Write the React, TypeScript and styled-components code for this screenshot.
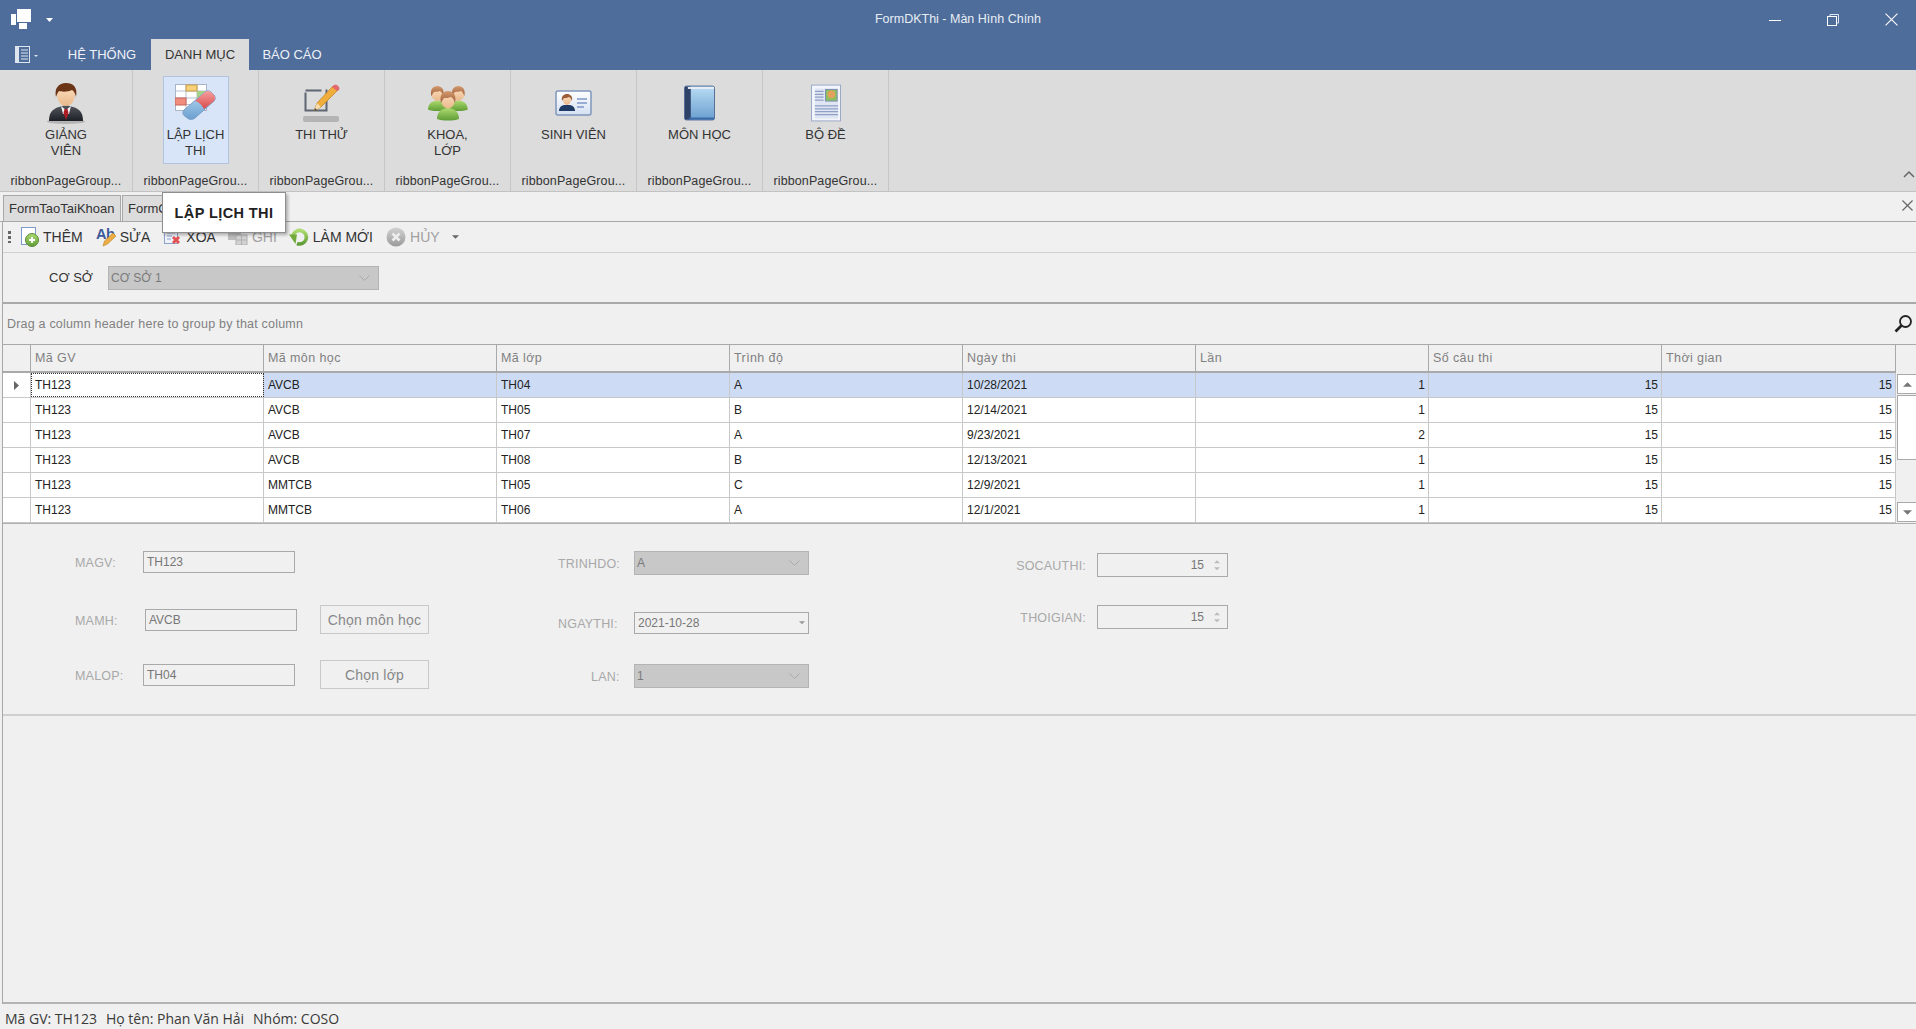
import React from "react";
import styled, { createGlobalStyle } from "styled-components";

const Global = createGlobalStyle`
  html, body { margin: 0; padding: 0; background: #f0f0f0; }
  body { font-family: "Liberation Sans", Arial, sans-serif; font-size: 13px; color: #222; overflow: hidden; }
  * { box-sizing: border-box; }
`;

const Page = styled.div`
  position: relative; width: 1916px; height: 1029px; display: flex; flex-direction: column; overflow: hidden; background: #f0f0f0;
`;
const TitleBar = styled.div`
  height: 39px; background: #4e6d9b; display: flex; align-items: center; position: relative; padding-left: 11px; color: #eef2f8;
`;
const TitleText = styled.div`
  position: absolute; left: 0; right: 0; top: 12px; text-align: center; font-size: 12.5px; color: #e8edf5;
`;
const WinButtons = styled.div`
  margin-left: auto; display: flex; align-items: center; gap: 46px; padding-right: 18px;
`;
const TabStrip = styled.div`
  height: 31px; background: #4e6d9b; display: flex; align-items: stretch; padding-left: 15px;
`;
const MenuIcon = styled.div`
  width: 25px; display: flex; align-items: center; margin-right: 29px;
`;
const RibbonTab = styled.div<{ $active?: boolean; $w: number; $ml?: number; $mr?: number }>`
  display: flex; align-items: center; justify-content: center; font-size: 13px; white-space: nowrap;
  width: ${p => p.$w}px; margin-left: ${p => p.$ml ?? 0}px; margin-right: ${p => p.$mr ?? 0}px;
  color: ${p => (p.$active ? "#333" : "#eef2f8")}; background: ${p => (p.$active ? "#dcdcdc" : "transparent")};
`;
const Ribbon = styled.div`
  height: 122px; background: #dcdcdc; border-bottom: 1px solid #c2c2c2; display: flex; position: relative;
`;
const Group = styled.div<{ $w: number }>`
  width: ${p => p.$w}px; height: 121px; border-right: 1px solid #c6c6c6; display: flex; flex-direction: column; align-items: center;
`;
const LargeButton = styled.div<{ $hot?: boolean }>`
  width: 66px; height: 88px; margin-top: 6px; display: flex; flex-direction: column; align-items: center; padding-top: 5px;
  border: 1px solid ${p => (p.$hot ? "#b2c4de" : "transparent")}; background: ${p => (p.$hot ? "#d8e5f8" : "transparent")};
  svg { flex: none; }
`;
const IconBox = styled.div`
  height: 42px; display: flex; align-items: center; justify-content: center; flex: none;
`;
const LargeLabel = styled.div`
  width: 90px; flex: none; text-align: center; font-size: 13px; line-height: 16px; color: #333; margin-top: 3px;
`;
const GroupCaption = styled.div`
  margin-top: auto; height: 19px; font-size: 12.5px; letter-spacing: .1px; color: #333; white-space: nowrap; line-height: 18px;
`;
const Collapse = styled.div`
  position: absolute; right: 1px; bottom: 11px; width: 12px; height: 10px; display: flex;
`;
const DocTabs = styled.div`
  height: 30px; border-bottom: 1px solid #a8a8a8; display: flex; align-items: flex-end; padding-left: 3px; gap: 1px; position: relative;
`;
const DocTab = styled.div<{ $w: number }>`
  width: ${p => p.$w}px; height: 26px; background: #dcdcdc; border: 1px solid #a8a8a8; border-bottom: none; padding: 5px 0 0 5px;
  font-size: 13px; color: #333; white-space: nowrap; overflow: hidden;
`;
const DocClose = styled.div`
  position: absolute; right: 2px; top: 8px; width: 12px; height: 12px; display: flex;
`;
const Tooltip = styled.div`
  position: absolute; left: 162px; top: 192px; width: 124px; height: 41px; background: #fff; border: 1px solid #8e8e8e;
  box-shadow: 2px 2px 3px rgba(0,0,0,.28); display: flex; align-items: center; justify-content: center;
  font-size: 14.5px; font-weight: 700; color: #222; z-index: 5; letter-spacing: .4px;
`;
const Content = styled.div`
  flex: 1; min-height: 0; margin-left: 2px; border-left: 1px solid #a8a8a8; display: flex; flex-direction: column;
`;
const Toolbar = styled.div`
  height: 31px; display: flex; align-items: center; padding-left: 5px; flex: none; border-bottom: 1px solid #d0d0d0;
`;
const Grip = styled.div`
  width: 3px; height: 12px; margin-right: 10px; background: repeating-linear-gradient(#666 0 3px, transparent 3px 5px);
`;
const ToolItem = styled.div<{ $off?: boolean; $mr: number }>`
  display: flex; align-items: center; gap: 4px; font-size: 14px; margin-right: ${p => p.$mr}px;
  color: ${p => (p.$off ? "#a0a0a0" : "#333")}; svg { flex: none; }
`;
const BasePanel = styled.div`
  height: 52px; flex: none; display: flex; align-items: center; border-bottom: 2px solid #a9a9a9; padding: 1px 0 0 46px; margin-top: -1px;
`;
const BaseLabel = styled.div`
  width: 59px; font-size: 13px; color: #333;
`;
const Combo = styled.div<{ $w: number; $h: number }>`
  width: ${p => p.$w}px; height: ${p => p.$h}px; background: #c8c8c8; border: 1px solid #b4b4b4; display: flex; align-items: center;
  justify-content: space-between; padding: 0 8px 0 2px; font-size: 12px; color: #7a7a7a; flex: none;
`;
const GroupPanel = styled.div`
  height: 41px; flex: none; display: flex; align-items: center; padding-left: 4px; font-size: 12.5px; letter-spacing: .2px; color: #808080; position: relative;
  border-bottom: 1px solid #a9a9a9;
`;
const SearchIcon = styled.div`
  position: absolute; right: 3px; top: 10px; display: flex;
`;
const GridWrap = styled.div`
  flex: none; display: flex; border-bottom: 1px solid #b0b0b0;
`;
const GridBody = styled.div`
  width: 1893px; flex: none;
`;
const GridRowEl = styled.div<{ $h?: number; $bg?: string; $line?: string }>`
  display: grid; grid-template-columns: 28px repeat(7, 233px) 234px; height: ${p => p.$h ?? 25}px;
  background: ${p => p.$bg ?? "#fff"}; border-bottom: ${p => (p.$line ? `2px solid ${p.$line}` : "1px solid #c8c8c8")};
`;
const HeadCell = styled.div`
  border-right: 1px solid #a9a9a9; display: flex; align-items: center; padding-left: 4px; font-size: 12.5px; letter-spacing: .4px; color: #808080;
`;
const Indicator = styled.div`
  border-right: 1px solid #c8c8c8; background: #fff; display: flex; align-items: center; justify-content: center;
`;
const Cell = styled.div<{ $right?: boolean; $focus?: boolean }>`
  border-right: 1px solid #c8c8c8; display: flex; align-items: center; padding: 0 3px 0 4px; font-size: 12px; color: #222;
  justify-content: ${p => (p.$right ? "flex-end" : "flex-start")};
  ${p => (p.$focus ? "background:#fff; outline: 1px dotted #333; outline-offset: -1px;" : "")}
`;
const ScrollBar = styled.div`
  width: 22px; flex: none; display: flex; flex-direction: column; margin-top: 28px; padding: 1px 0 1px 1px; background: #f0f0f0;
`;
const ScrollBtn = styled.div`
  height: 20px; background: #fff; border: 1px solid #a9a9a9; display: flex; align-items: center; justify-content: center; flex: none;
`;
const ScrollThumb = styled.div`
  height: 65px; background: #fff; border: 1px solid #a9a9a9; flex: none; margin-top: 1px;
`;
const ScrollSpace = styled.div`
  flex: 1;
`;
const FormPanel = styled.div`
  height: 192px; flex: none; border-bottom: 2px solid #cfcfcf; display: flex; position: relative;
`;
const FormCol = styled.div<{ $w: number }>`
  width: ${p => p.$w}px; flex: none; display: flex; flex-direction: column;
`;
const FormRow = styled.div<{ $mt: number; $pl: number }>`
  display: flex; align-items: center; margin-top: ${p => p.$mt}px; padding-left: ${p => p.$pl}px; flex: none;
`;
const FieldLabel = styled.div<{ $w: number; $right?: boolean }>`
  width: ${p => p.$w}px; flex: none; font-size: 12.5px; letter-spacing: .2px; color: #a8a8a8; text-align: ${p => (p.$right ? "right" : "left")};
  padding-right: ${p => (p.$right ? 11 : 0)}px; padding-top: 2px;
`;
const TextInput = styled.div<{ $w?: number; $h?: number; $right?: boolean }>`
  width: ${p => p.$w ?? 152}px; height: ${p => p.$h ?? 22}px; flex: none; border: 1px solid #a9a9a9; display: flex; align-items: center; padding: 0 3px;
  font-size: 12px; color: #777; justify-content: ${p => (p.$right ? "flex-end" : "space-between")}; background: #f0f0f0;
`;
const FormButton = styled.div<{ $ml: number }>`
  width: 109px; height: 29px; margin-left: ${p => p.$ml}px; flex: none; border: 1px solid #c8c8c8; display: flex; align-items: center; justify-content: center; font-size: 14px; letter-spacing: .2px; color: #888;
`;
const Spinner = styled.div`
  display: flex; flex-direction: column; gap: 3px; margin: 0 4px 0 10px;
`;
const Spacer = styled.div`
  flex: 1; border-bottom: 2px solid #b4b4b4;
`;
const StatusBar = styled.div`
  height: 25px; flex: none; display: flex; align-items: center; padding: 4px 0 0 5px; gap: 9px; font-family: "Open Sans", sans-serif; font-size: 14px; color: #3a3a3a;
`;
const Caret = styled.svg`
  margin-left: 14px;
`;
const HiddenSvg = styled.svg`
  position: absolute;
`;

const Tri = ({ up, c = "#777", w = 9 }: { up?: boolean; c?: string; w?: number }) => (
  <svg width={w} height={w / 2 + 0.5} viewBox="0 0 10 5"><path d={up ? "M5 0 10 5H0z" : "M0 0h10L5 5z"} fill={c} /></svg>
);
const Chevron = () => (
  <svg width="11" height="6" viewBox="0 0 11 6"><path d="M.5.5 5.5 5.5 10.5.5" fill="none" stroke="#aaa" /></svg>
);

const Defs = () => (
  <HiddenSvg width="0" height="0">
    <defs>
      <linearGradient id="suit" x1="0" y1="0" x2="0" y2="1"><stop offset="0" stopColor="#55595f" /><stop offset="1" stopColor="#1d2026" /></linearGradient>
      <linearGradient id="skin" x1="0" y1="0" x2="0" y2="1"><stop offset="0" stopColor="#fde2c2" /><stop offset="1" stopColor="#eab88c" /></linearGradient>
      <linearGradient id="erase" x1="0" y1="0" x2="0" y2="1"><stop offset="0" stopColor="#f7a0a0" /><stop offset="1" stopColor="#d84a4a" /></linearGradient>
      <linearGradient id="blue" x1="0" y1="0" x2="0" y2="1"><stop offset="0" stopColor="#b9dcf4" /><stop offset="1" stopColor="#6a9fd0" /></linearGradient>
      <linearGradient id="green" x1="0" y1="0" x2="0" y2="1"><stop offset="0" stopColor="#aedb70" /><stop offset="1" stopColor="#5f9c35" /></linearGradient>
      <linearGradient id="hair" x1="0" y1="0" x2="0" y2="1"><stop offset="0" stopColor="#d59a70" /><stop offset="1" stopColor="#9c5d36" /></linearGradient>
      <linearGradient id="card" x1="0" y1="0" x2="0" y2="1"><stop offset="0" stopColor="#ffffff" /><stop offset="1" stopColor="#d5e0f2" /></linearGradient>
      <linearGradient id="disk" x1="0" y1="0" x2="0" y2="1"><stop offset="0" stopColor="#d2d2d2" /><stop offset="1" stopColor="#9a9a9a" /></linearGradient>
    </defs>
  </HiddenSvg>
);

const ManIcon = () => (
  <svg width="40" height="42" viewBox="0 0 40 42">
    <ellipse cx="20" cy="39.500" rx="19" ry="2.500" fill="#999" opacity=".6" />
    <path d="M3 39c0-8 3-12 10-14l7-2 7 2c7 2 10 6 10 14z" fill="url(#suit)" />
    <path d="M15 24l5 4 5-4 -2 8h-6z" fill="#f2f2f2" />
    <path d="M18.500 27h3l1 4-2.500 7-2.500-7z" fill="#b01c24" />
    <ellipse cx="20" cy="13" rx="9" ry="11" fill="url(#skin)" />
    <path d="M10 15C8 6 13 1 20 1s12 4 10 14c-1-4-2-6-4-7-4 2-10 2-13 1-1 1-2 3-3 6z" fill="#6b3416" />
  </svg>
);
const ScheduleIcon = () => (
  <svg width="42" height="38" viewBox="0 0 42 38">
    <rect x=".5" y=".5" width="31" height="26" fill="#fff" stroke="#a9b4c8" />
    <path d="M0 7h32M0 14h32M0 20.500h32M11 0v27M22 0v27" stroke="#b5bfd0" />
    <rect x="11" y="1" width="11" height="6" fill="#f6d178" stroke="#c99b45" />
    <rect x="22" y="7" width="10" height="7" fill="#a6d188" />
    <rect x="0" y="14" width="11" height="7" fill="#ef8c7e" stroke="#c6655a" />
    <path d="M9 26 30 8c2-1.500 4-1.500 6 0l3 3c1.500 2 1.500 4 0 6L20 34c-2 1.500-5 2-7 .5l-4-3c-1.500-1.500-1.500-4 0-5.500z" fill="url(#blue)" stroke="#7b9cc4" />
    <path d="M20 17 30 8c2-1.500 4-1.500 6 0l3 3c1.500 2 1.500 4 0 6L29 25c-2-4-5-7-9-8z" fill="url(#erase)" />
  </svg>
);
const PencilIcon = () => (
  <svg width="38" height="38" viewBox="0 0 38 38">
    <rect x="2.500" y="6.500" width="21" height="20" fill="none" stroke="#5e6672" strokeWidth="2" strokeDasharray="16 4 60" />
    <path d="M11 27 14 19 30 2l5 4-17 17z" fill="#f0ad3c" stroke="#b97f20" strokeWidth=".7" />
    <path d="M11 27l3-8 4 4z" fill="#f4dcb0" />
    <path d="M11 27l1-3 2 2z" fill="#444" />
    <path d="M29 3l2-2c1-.5 2-.5 3 0l2 2c.5 1 .5 2 0 3l-2 1z" fill="#e0686c" />
    <rect x="0" y="32" width="36" height="6" rx="2" fill="#aaa" opacity=".8" />
  </svg>
);
const Person = ({ x, y, s = 1 }: { x: number; y: number; s?: number }) => (
  <g transform={`translate(${x} ${y}) scale(${s})`}>
    <path d="M0 28c0-7 4-10 10-11h2c6 1 10 4 10 11 -6 2-16 2-22 0z" fill="url(#green)" />
    <ellipse cx="11" cy="9" rx="7" ry="8.500" fill="url(#skin)" />
    <path d="M4 12C2 4 6 0 11 0s9 4 7 12c-1-3-2-5-4-6-2 1-5 1-7 1-1 1-2 3-3 5z" fill="url(#hair)" />
  </g>
);
const PeopleIcon = () => (
  <svg width="40" height="36" viewBox="0 0 40 36">
    <Person x={0} y={1} s={.85} /><Person x={21} y={1} s={.85} /><Person x={9} y={6} s={1} />
  </svg>
);
const CardIcon = () => (
  <svg width="37" height="26" viewBox="0 0 37 26">
    <rect x="1" y="1" width="35" height="24" rx="2" fill="url(#card)" stroke="#7f97bb" strokeWidth="1.500" />
    <path d="M4 21c0-4 3-6 6-6h4c3 0 6 2 6 6z" fill="#1f3a63" />
    <ellipse cx="12" cy="10" rx="4" ry="5" fill="url(#skin)" />
    <path d="M7 11c-1-5 2-7 5-7s6 2 5 7c-1-2-1-3-3-4-2 1-3 1-5 1z" fill="#9c5d36" />
    <path d="M22 9h10M22 13h10M22 17h7" stroke="#7f97c8" strokeWidth="1.500" />
  </svg>
);
const BookIcon = () => (
  <svg width="31" height="36" viewBox="0 0 32 36">
    <rect x=".5" y=".5" width="31" height="35" rx="2" fill="url(#blue)" stroke="#546c94" />
    <rect x="1" y="1" width="6" height="34" fill="#2f4369" />
    <rect x="4" y="1.500" width="27" height="2" fill="#e8eef6" />
    <rect x="5" y="33" width="26" height="2" fill="#3a6aa8" />
  </svg>
);
const DocIcon = () => (
  <svg width="30" height="38" viewBox="0 0 31 38">
    <rect x=".5" y=".5" width="30" height="37" fill="#f2f5fb" stroke="#9aa8c6" />
    <rect x="4" y="4" width="24" height="31" fill="#dfe5f2" />
    <path d="M4 7h9M4 10h9M4 13h9M4 16h9M4 22h24M4 25h24M4 28h24M4 31h24" stroke="#8f9fc6" strokeWidth="1.300" />
    <rect x="15" y="5" width="12" height="12" fill="#8cbf60" stroke="#7a8db0" />
    <circle cx="21" cy="10" r="4" fill="#e3a15c" />
  </svg>
);
const ThemIcon = () => (
  <svg width="18" height="20" viewBox="0 0 18 20">
    <rect x=".5" y=".5" width="14" height="17" fill="#fff" stroke="#7e9bcf" />
    <circle cx="11" cy="13" r="6.500" fill="url(#green)" stroke="#5a8a35" />
    <path d="M8 13h6M11 10v6" stroke="#fff" strokeWidth="1.800" />
  </svg>
);
const SuaIcon = () => (
  <svg width="20" height="20" viewBox="0 0 20 20">
    <text x="0" y="12" fontFamily="Liberation Sans" fontWeight="700" fontSize="14.500" letterSpacing="-.5" fill="#3c5a9a">Ab</text>
    <path d="M7 19l1.500-5L17 6l3 3-8.500 8z" fill="#eead45" stroke="#b97f20" strokeWidth=".6" />
  </svg>
);
const XoaIcon = () => (
  <svg width="18" height="18" viewBox="0 0 18 18">
    <rect x=".5" y="1.500" width="13" height="14" fill="#eef2fa" stroke="#8ea2cc" />
    <path d="M3 5h8M3 8h5M3 11h4" stroke="#8ea2cc" />
    <path d="M8 10l2-2 2 2 2-2 2 2-2 2 2 2-2 2-2-2-2 2-2-2 2-2z" fill="#e25050" />
  </svg>
);
const GhiIcon = () => (
  <svg width="20" height="16" viewBox="0 0 20 16">
    <rect x="0" y="2" width="13" height="9" fill="#bdbdbd" />
    <rect x="8" y="6" width="11" height="10" fill="#d2d2d2" stroke="#b0b0b0" />
    <path d="M8 11h11M13.500 6v10" stroke="#b0b0b0" />
  </svg>
);
const LamMoiIcon = () => (
  <svg width="20" height="20" viewBox="0 0 20 20">
    <path d="M4 8.500A6.800 6.800 0 1 1 8 16.500" fill="none" stroke="url(#green)" strokeWidth="3.600" />
    <path d="M0 7.500h8l-1.500 9.500z" fill="#72ab3c" />
  </svg>
);
const HuyIcon = () => (
  <svg width="20" height="20" viewBox="0 0 20 20">
    <circle cx="10" cy="10" r="9.500" fill="url(#disk)" />
    <path d="M6.500 6.500l7 7M13.500 6.500l-7 7" stroke="#eee" strokeWidth="2.600" />
  </svg>
);
const AppLogo = () => (
  <svg width="21" height="21" viewBox="0 0 21 21" fill="#fff">
    <rect x="0" y="5" width="5" height="11" /><rect x="6" y="0" width="14" height="13" /><rect x="8" y="14" width="8" height="6" />
  </svg>
);
const MenuGlyph = () => (
  <svg width="24" height="17" viewBox="0 0 24 17">
    <rect x=".5" y=".5" width="14" height="16" fill="none" stroke="#dfe5ee" />
    <rect x="1" y="1" width="3" height="15" fill="#dfe5ee" />
    <path d="M6 4h7M6 7h7M6 10h7M6 13h7" stroke="#dfe5ee" />
    <path d="M19 9h4l-2 2z" fill="#dfe5ee" />
  </svg>
);
const X = ({ s, c, w = 1 }: { s: number; c: string; w?: number }) => (
  <svg width={s} height={s} viewBox="0 0 12 12"><path d="M.5.5l11 11M11.500.5l-11 11" stroke={c} strokeWidth={w} /></svg>
);

const groups = [
  { w: 133, icon: <ManIcon />, label: <>GIẢNG<br />VIÊN</>, cap: "ribbonPageGroup..." },
  { w: 126, icon: <ScheduleIcon />, label: <>LẬP LỊCH<br />THI</>, cap: "ribbonPageGrou...", hot: true },
  { w: 126, icon: <PencilIcon />, label: <>THI THỬ</>, cap: "ribbonPageGrou..." },
  { w: 126, icon: <PeopleIcon />, label: <>KHOA,<br />LỚP</>, cap: "ribbonPageGrou..." },
  { w: 126, icon: <CardIcon />, label: <>SINH VIÊN</>, cap: "ribbonPageGrou..." },
  { w: 126, icon: <BookIcon />, label: <>MÔN HỌC</>, cap: "ribbonPageGrou..." },
  { w: 126, icon: <DocIcon />, label: <>BỘ ĐỀ</>, cap: "ribbonPageGrou..." },
];

const heads = ["Mã GV", "Mã môn học", "Mã lớp", "Trình độ", "Ngày thi", "Lần", "Số câu thi", "Thời gian"];
const rows = [
  ["TH123", "AVCB", "TH04", "A", "10/28/2021", "1", "15", "15"],
  ["TH123", "AVCB", "TH05", "B", "12/14/2021", "1", "15", "15"],
  ["TH123", "AVCB", "TH07", "A", "9/23/2021", "2", "15", "15"],
  ["TH123", "AVCB", "TH08", "B", "12/13/2021", "1", "15", "15"],
  ["TH123", "MMTCB", "TH05", "C", "12/9/2021", "1", "15", "15"],
  ["TH123", "MMTCB", "TH06", "A", "12/1/2021", "1", "15", "15"],
];

const SpinBox = () => (
  <Spinner><Tri up c="#bbb" w={6} /><Tri c="#bbb" w={6} /></Spinner>
);

export default function App() {
  return (
    <Page>
      <Global />
      <Defs />
      <TitleBar>
        <AppLogo />
        <Caret width="7" height="4" viewBox="0 0 7 4"><path d="M0 0h7L3.500 4z" fill="#fff" /></Caret>
        <TitleText>FormDKThi - Màn Hình Chính</TitleText>
        <WinButtons>
          <svg width="12" height="12" viewBox="0 0 12 12"><path d="M0 6.500h12" stroke="#fff" /></svg>
          <svg width="12" height="12" viewBox="0 0 12 12"><path d="M3 2.500V.5h8.500v8.500H9.500" fill="none" stroke="#dfe6f2" /><rect x=".5" y="2.500" width="9" height="9" fill="none" stroke="#fff" /></svg>
          <X s={13} c="#fff" />
        </WinButtons>
      </TitleBar>
      <TabStrip>
        <MenuIcon><MenuGlyph /></MenuIcon>
        <RibbonTab $w={66} $mr={16}>HỆ THỐNG</RibbonTab>
        <RibbonTab $w={98} $active>DANH MỤC</RibbonTab>
        <RibbonTab $w={54} $ml={16}>BÁO CÁO</RibbonTab>
      </TabStrip>
      <Ribbon>
        {groups.map((g, i) => (
          <Group key={i} $w={g.w}>
            <LargeButton $hot={g.hot}>
              <IconBox>{g.icon}</IconBox>
              <LargeLabel>{g.label}</LargeLabel>
            </LargeButton>
            <GroupCaption>{g.cap}</GroupCaption>
          </Group>
        ))}
        <Collapse>
          <svg width="12" height="8" viewBox="0 0 12 8"><path d="M1 7l5-5 5 5" fill="none" stroke="#666" strokeWidth="1.500" /></svg>
        </Collapse>
      </Ribbon>
      <DocTabs>
        <DocTab $w={118}>FormTaoTaiKhoan</DocTab>
        <DocTab $w={140}>FormChonMonHoc</DocTab>
        <DocClose><X s={11} c="#666" w={1.300} /></DocClose>
      </DocTabs>
      <Tooltip>LẬP LỊCH THI</Tooltip>
      <Content>
        <Toolbar>
          <Grip />
          <ToolItem $mr={13}><ThemIcon />THÊM</ToolItem>
          <ToolItem $mr={14}><SuaIcon />SỬA</ToolItem>
          <ToolItem $mr={12}><XoaIcon />XÓA</ToolItem>
          <ToolItem $mr={12} $off><GhiIcon />GHI</ToolItem>
          <ToolItem $mr={13}><LamMoiIcon />LÀM MỚI</ToolItem>
          <ToolItem $mr={12} $off><HuyIcon />HỦY</ToolItem>
          <Tri c="#666" w={7} />
        </Toolbar>
        <BasePanel>
          <BaseLabel>CƠ SỞ</BaseLabel>
          <Combo $w={271} $h={24}>CƠ SỞ 1<Chevron /></Combo>
        </BasePanel>
        <GroupPanel>
          Drag a column header here to group by that column
          <SearchIcon>
            <svg width="19" height="19" viewBox="0 0 19 19"><circle cx="11.500" cy="7.500" r="5.500" fill="none" stroke="#222" strokeWidth="1.800" /><path d="M7.500 11.500 1.500 17.500" stroke="#222" strokeWidth="2.600" /></svg>
          </SearchIcon>
        </GroupPanel>
        <GridWrap>
          <GridBody>
            <GridRowEl $h={28} $bg="#f0f0f0" $line="#a9a9a9">
              <HeadCell />
              {heads.map(h => <HeadCell key={h}>{h}</HeadCell>)}
            </GridRowEl>
            {rows.map((r, i) => (
              <GridRowEl key={i} $bg={i === 0 ? "#cddcf4" : "#fff"}>
                <Indicator>{i === 0 && <svg width="5" height="9" viewBox="0 0 5 9"><path d="M0 0l5 4.500L0 9z" fill="#666" /></svg>}</Indicator>
                {r.map((c, j) => <Cell key={j} $right={j >= 5} $focus={i === 0 && j === 0}>{c}</Cell>)}
              </GridRowEl>
            ))}
          </GridBody>
          <ScrollBar>
            <ScrollBtn><Tri up /></ScrollBtn>
            <ScrollThumb />
            <ScrollSpace />
            <ScrollBtn><Tri /></ScrollBtn>
          </ScrollBar>
        </GridWrap>
        <FormPanel>
          <FormCol $w={520}>
            <FormRow $mt={27} $pl={72}><FieldLabel $w={68}>MAGV:</FieldLabel><TextInput>TH123</TextInput></FormRow>
            <FormRow $mt={32} $pl={72}><FieldLabel $w={70}>MAMH:</FieldLabel><TextInput>AVCB</TextInput><FormButton $ml={23}>Chọn môn học</FormButton></FormRow>
            <FormRow $mt={26} $pl={72}><FieldLabel $w={68}>MALOP:</FieldLabel><TextInput>TH04</TextInput><FormButton $ml={25}>Chọn lớp</FormButton></FormRow>
          </FormCol>
          <FormCol $w={460}>
            <FormRow $mt={27} $pl={35}><FieldLabel $w={76}>TRINHDO:</FieldLabel><Combo $w={175} $h={24}>A<Chevron /></Combo></FormRow>
            <FormRow $mt={37} $pl={35}><FieldLabel $w={76}>NGAYTHI:</FieldLabel><TextInput $w={175}>2021-10-28<Tri c="#999" w={6} /></TextInput></FormRow>
            <FormRow $mt={30} $pl={35}><FieldLabel $w={76}>&nbsp;&nbsp;&nbsp;&nbsp;&nbsp;&nbsp;&nbsp;&nbsp;&nbsp;LAN:</FieldLabel><Combo $w={175} $h={24}>1<Chevron /></Combo></FormRow>
          </FormCol>
          <FormCol $w={300}>
            <FormRow $mt={29} $pl={0}><FieldLabel $w={114} $right>SOCAUTHI:</FieldLabel><TextInput $w={131} $h={24} $right>15<SpinBox /></TextInput></FormRow>
            <FormRow $mt={28} $pl={0}><FieldLabel $w={114} $right>THOIGIAN:</FieldLabel><TextInput $w={131} $h={24} $right>15<SpinBox /></TextInput></FormRow>
          </FormCol>
        </FormPanel>
        <Spacer />
      </Content>
      <StatusBar><span>Mã GV: TH123</span><span>Họ tên: Phan Văn Hải</span><span>Nhóm: COSO</span></StatusBar>
    </Page>
  );
}
